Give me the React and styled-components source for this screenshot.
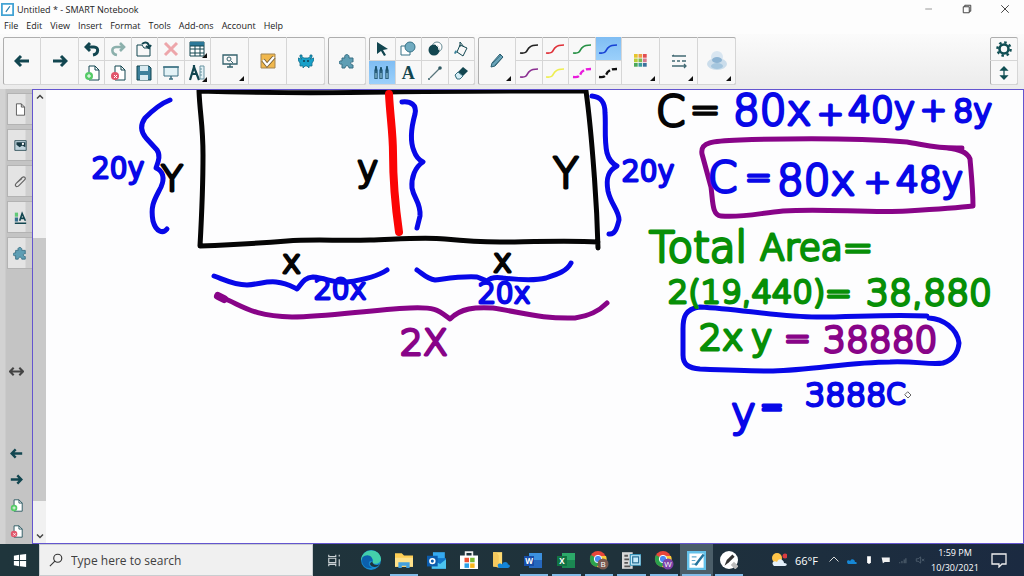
import styled, { createGlobalStyle } from "styled-components";

const GlobalStyle = createGlobalStyle`
  * {
    box-sizing: border-box;
  }
  body {
    margin: 0;
    background: #fdfdfd;
    color: #222;
    font-family: "Open Sans", "Noto Sans", sans-serif;
    font-size: 10px;
  }
  button {
    border: 0;
    padding: 0;
    background: none;
    color: inherit;
    font: inherit;
  }
`

const Page = styled.div`
  display: flex;
  flex-direction: column;
  height: 100vh;
  overflow: hidden;
`

const TitleBar = styled.header`
  display: flex;
  align-items: center;
  height: 18px;
  flex: none;
  padding-left: 1px;
`

const Title = styled.h1`
  margin: 0;
  flex: 1;
  padding-left: 3px;
  font-size: 9px;
  font-weight: 400;
`

const WindowButton = styled.button`
  width: 38px;
  height: 18px;
  display: grid;
  place-items: center;
`

const MenuBar = styled.nav`
  display: flex;
  align-items: center;
  gap: 8px;
  height: 16px;
  flex: none;
  padding-left: 4px;
`

const MenuItem = styled.button`
  font-size: 9px;
  line-height: 16px;
`

const ToolBar = styled.div`
  display: flex;
  align-items: flex-start;
  gap: 3px;
  height: 55px;
  flex: none;
  padding: 3px 6px 0 3px;
  background: linear-gradient(#fbfbfb, #ebebeb);
`

const ToolGroup = styled.div`
  display: flex;
  height: 48px;
  border-radius: 2px;
  overflow: hidden;
  background: #f8f8f8;
  outline: 1px solid #aeaeae;
  outline-offset: -1px;
  margin-left: ${p => p.$end ? "auto" : "0"};
`

const ToolGrid = styled.div`
  display: grid;
  grid-template-columns: repeat(${p => p.$cols}, 1fr);
  grid-template-rows: 24px 24px;
  width: ${p => p.$width}px;
`

const ToolButton = styled.button`
  position: relative;
  display: grid;
  place-items: center;
  min-width: ${p => p.$large ? "38px" : "0"};
  border-right: 1px solid #d6d6d6;
  border-bottom: 1px solid #d6d6d6;
  background: ${p => p.$active ? "linear-gradient(#7fbdf3, #9bd0fb)" : "transparent"};
`

const Corner = styled.span`
  position: absolute;
  right: ${p => p.$large ? "4px" : "3px"};
  bottom: ${p => p.$large ? "3px" : "2px"};
  border-left: 5px solid transparent;
  border-bottom: 5px solid #111;
`

const Workspace = styled.main`
  display: flex;
  flex: 1;
  min-height: 0;
`

const Sidebar = styled.aside`
  display: flex;
  flex-direction: column;
  width: 32px;
  flex: none;
  padding-top: 4px;
  background: linear-gradient(90deg, #d2d2d2 5px, #c4c4c4 6px);
`

const SideTabs = styled.div`
  display: flex;
  flex-direction: column;
  gap: 4px;
  padding-left: 7px;
`

const SideTab = styled.button`
  height: 32px;
  display: grid;
  place-items: center;
  background: linear-gradient(90deg, #e4e4e4 17px, #cfcfcf 18px);
  border: 1px solid #b3b3b3;
  border-right: 0;
`

const SideNav = styled.div`
  display: flex;
  flex-direction: column;
  align-items: center;
  flex: 1;
  justify-content: flex-end;
`

const SideButton = styled.button`
  width: 24px;
  height: 26px;
  display: grid;
  place-items: center;
  margin-bottom: ${p => p.$apart ? "56px" : "0"};
`

const Sheet = styled.section`
  display: flex;
  flex: 1;
  min-width: 0;
  border: 1px solid #6455cf;
  background: #fdfdfe;
`

const ScrollTrack = styled.div`
  display: flex;
  flex-direction: column;
  width: 13px;
  flex: none;
  background: #f1f1f1;
`

const ScrollButton = styled.button`
  height: 14px;
  display: grid;
  place-items: center;
`

const ScrollRest = styled.div`
  flex: ${p => p.$share};
  background: ${p => p.$thumb ? "#c9c9c9" : "transparent"};
`

const Drawing = styled.svg`
  flex: 1;
  min-width: 0;
  height: 100%;
  fill: none;
  stroke-linecap: round;
  stroke-linejoin: round;
`

const Ink = styled.path`
  stroke: ${p => p.$color};
  stroke-width: ${p => p.$wide ? 8 : 5};
`

const Written = styled.text`
  font-family: "DejaVu Sans", sans-serif;
  font-weight: 200;
  font-size: ${p => p.$size}px;
  fill: ${p => p.$color};
  stroke: ${p => p.$color};
  stroke-width: 3;
`

const TaskBar = styled.footer`
  display: flex;
  align-items: stretch;
  height: 32px;
  flex: none;
  background: linear-gradient(90deg, #1f353c, #1f323b 60%, #1b2a41);
  color: #fff;
`

const StartButton = styled.button`
  width: 39px;
  display: grid;
  place-items: center;
`

const SearchBox = styled.label`
  display: flex;
  align-items: center;
  gap: 8px;
  width: 274px;
  padding-left: 9px;
  background: #f0f0f0;
  border: 1px solid #c9cdd0;
`

const SearchInput = styled.input`
  border: 0;
  background: none;
  outline: 0;
  padding: 0;
  width: 200px;
  font: 12px "Open Sans", sans-serif;
  &::placeholder {
    color: #404040;
    opacity: 1;
  }
`

const TaskView = styled.button`
  width: 42px;
  display: grid;
  place-items: center;
`

const Apps = styled.div`
  display: grid;
  grid-template-columns: repeat(12, 1fr);
  width: 390px;
`

const AppButton = styled.button`
  display: grid;
  place-items: center;
  padding-top: 2px;
  background: ${p => p.$active ? "#4b5e69" : "transparent"};
  border-bottom: 2px solid transparent;
  border-image: ${p => p.$open ? "linear-gradient(90deg, transparent 4px, #82bce8 4px, #82bce8 29px, transparent 29px) 2" : "none"};
`

const Tray = styled.div`
  display: flex;
  align-items: center;
  flex: 1;
  justify-content: flex-end;
  padding-right: 17px;
`

const Weather = styled.button`
  display: flex;
  align-items: center;
  gap: 8px;
  font-size: 11px;
  margin-right: 10px;
`

const TrayIcons = styled.div`
  display: grid;
  grid-template-columns: repeat(5, 17px);
  place-items: center;
  margin-left: 3px;
`

const Clock = styled.time`
  width: 54px;
  text-align: center;
  font-size: 9px;
  line-height: 15px;
  margin-right: 9px;
`

const DARK = "#124650"
const BLUE = "#0808e8"
const GREEN = "#078f07"
const PURPLE = "#880488"
const BLACK = "#050505"

const icons = {
  back: <path d="M15 8H3M7 3 2 8l5 5" stroke={DARK} strokeWidth="3" />,
  forward: <path d="M1 8h12M9 3l5 5-5 5" stroke={DARK} strokeWidth="3" />,
  undo: <path d="M6 2 2 6l4 4M3 6h7c5 0 5 7-1 8" stroke={DARK} strokeWidth="3" />,
  redo: <path d="m10 2 4 4-4 4M13 6H6c-5 0-5 7 1 8" stroke="#8cb0ac" strokeWidth="2.6" />,
  open: <g><path d="M1 15V4h5l2 3h6v8z" stroke={DARK} /><path d="M6 3c4-3 7-1 7 3m-3-1 3 2 2-3" stroke={DARK} strokeWidth="2" /></g>,
  remove: <path d="m2 2 12 12M14 2 2 14" stroke="#eda6aa" strokeWidth="3" />,
  table: <g><path d="M1 1h14v14H1z" fill="#fff" stroke={DARK} /><path d="M1 1h14v4H1z" fill="#2c7898" /><path d="M1 5h14M1 8h14M1 12h14M6 5v10M11 5v10" stroke={DARK} /></g>,
  addPage: <g><path d="M5 1h6l4 4v10H5z" fill="#fff" stroke={DARK} /><path d="M11 1v4h4" stroke={DARK} /><circle cx="5" cy="11" r="4" fill="#55cb67" /><path d="M5 9v4M3 11h4" stroke="#fff" /></g>,
  delPage: <g><path d="M5 1h6l4 4v10H5z" fill="#fff" stroke={DARK} /><path d="M11 1v4h4" stroke={DARK} /><circle cx="5" cy="11" r="4" fill="#e2566c" /><path d="m4 10 3 3M7 10l-3 3" stroke="#fff" /></g>,
  save: <g><path d="M1 1h12l2 2v12H1z" fill="#3d809b" stroke={DARK} /><path d="M4 1h8v5H4zM4 10h8v5H4z" fill="#d8eaf0" /></g>,
  shade: <g><path d="M1 2h14v9H1z" fill="#e3f2f6" stroke="#3d7183" /><path d="M0 2h16M8 11v3M6 14h4" stroke="#3d7183" strokeWidth="1.5" /></g>,
  measure: <g><path d="m1 15 4-13 5 13M3 9h5M5 2V0" stroke={DARK} strokeWidth="2.2" /><path d="M11 1h4v13h-4zM11 4h2M11 7h2M11 10h2" fill="#e3f2f6" stroke="#6893a0" /></g>,
  screen: <g><path d="M1 2h14v9H1zM8 11v3M5 14h6" stroke="#34616c" strokeWidth="1.3" /><circle cx="7" cy="6" r="2" stroke="#34616c" /><path d="m9 8 2 2" stroke="#34616c" /></g>,
  check: <g><path d="M1 1h14v14H1z" fill="#f1b84d" stroke="#a38553" /><path d="m3 7 4 5 7-8" stroke="#735d36" strokeWidth="4" /><path d="m3 7 4 5 7-8" stroke="#fff" strokeWidth="2.2" /></g>,
  monster: <g><path d="M4 4V2H2v2l2 2-4-1v2l2 3v3h3v2l2-2h2l2 2v-2h3v-3l2-3V5l-4 1 2-2V2h-2v2l-2 1H6z" fill="#18a0c8" stroke="#176d89" strokeWidth=".8" /><circle cx="6" cy="8" r="1" fill="#123d50" /><circle cx="10" cy="8" r="1" fill="#123d50" /></g>,
  puzzle: <path d="M3 5h3C4 1 11 0 10 5h4v4c-3-1-3 3 0 3v3h-4c0-3-4-3-4 0H3v-4c-4 1-4-4 0-3z" fill="#5e9eb4" stroke="#396f83" />,
  pointer: <path d="m3 1 11 7-5 1 3 5-2 1-3-5-4 3z" fill={DARK} />,
  shapes: <g><path d="M1 5h9v9H1z" fill="#fff" stroke="#367287" /><circle cx="10" cy="6" r="5" fill="#70abc0" stroke="#367287" /></g>,
  fillShape: <g><circle cx="10" cy="6" r="5" fill="#fff" stroke="#6a8d96" /><circle cx="7" cy="9" r="5.5" fill={DARK} /><path d="M9 4a5 5 0 0 1 3 5" stroke="#fff" /></g>,
  bucket: <g><path d="m7 4 7 3-4 8-6-4zM7 6V1l4 5" stroke={DARK} /><path d="M3 9c-4 4 0 5 1 2z" fill="#398199" /></g>,
  pens: <g><path d="M2 5v9M7 5v9M13 5v9" stroke="#2a5f7c" strokeWidth="3.4" /><path d="m1 5 1-4 1 4zM6 5l1-3 1 3zM12 5l1-4 1 4z" fill="#174f6b" stroke="#174f6b" /><path d="M2 8v5M7 8v5M13 8v5" stroke="#8ec0d6" strokeWidth="1.2" /></g>,
  line: <g><path d="M3 13 13 3" stroke="#58757c" strokeWidth="1.3" /><circle cx="13" cy="3" r="1.8" fill="#315b65" /><circle cx="2" cy="14" r="1" fill="#315b65" /></g>,
  eraser: <g><path d="m2 10 8-8 5 4-8 8-4-1z" fill={DARK} /><path d="m2 10 3-3 5 4-3 3H4z" fill="#d4edf5" stroke="#397181" /></g>,
  pencil: <g><path d="M3 10 11 1l3 3-8 9-4 1z" fill="#68a3b8" stroke="#2b5e70" /><path d="m4 10 8-8M6 12l8-8" stroke="#2b5e70" strokeWidth=".6" /></g>,
  lines: <path d="M1 3h14M1 3l2-1M1 8h3M6 8h3M11 8h4M1 13h14M13 11l2 2-2 2" stroke="#416973" strokeWidth="1.3" />,
  gear: <g><circle cx="8" cy="8" r="4.5" stroke="#0f4e53" strokeWidth="2.6" /><circle cx="8" cy="8" r="6.6" stroke="#0f4e53" strokeWidth="2.4" strokeDasharray="2.5 2.68" strokeLinecap="butt" /></g>,
  updown: <path d="M8 3v10M5 5l3-3 3 3zM5 11l3 3 3-3z" fill="#0f4e53" stroke="#0f4e53" strokeWidth="1.3" />,
  leftright: <path d="M2 8h12M5 4 1 8l4 4M11 4l4 4-4 4" stroke="#444" strokeWidth="2.2" />,
  page: <path d="M3 1h6l4 4v10H3zM9 1v4h4" fill="#fff" stroke="#444" />,
  photo: <g><path d="M1 2h14v12H1z" fill="#bfd3dc" stroke="#23444d" /><path d="M3 4h11v6l-4-2-3 2-4-3z" fill="#173943" /><circle cx="11" cy="6" r="1.4" fill="#fff" /></g>,
  clip: <path d="m3 10 7-7c3-2 5 1 3 3l-7 7c-3 3-6 0-3-3l7-6" stroke="#626262" strokeWidth="1.4" />,
  textTab: <g><path d="M1 2h4v5H1z" fill="#62c978" /><path d="M1 8h4v5H1z" fill="#36708d" /><path d="m7 12 3-9 4 9M8 9h5M1 15h14" stroke={DARK} strokeWidth="2" /></g>,
  up: <path d="m4 10 4-4 4 4" stroke="#444" strokeWidth="2" />,
  down: <path d="m4 6 4 4 4-4" stroke="#444" strokeWidth="2" />,
  min: <path d="M3 8h9" stroke="#777" />,
  restore: <path d="M3 5h8v8H3zM5 5V3h8v8h-2" stroke="#333" strokeWidth="1.2" />,
  close: <path d="m3 3 10 10M13 3 3 13" stroke="#333" strokeWidth="1.2" />,
  logo: <g><path d="M1 1h14v14H1z" fill="#fff" stroke="#43a3d4" strokeWidth="2.4" /><path d="m6 11 5-7" stroke="#287dac" strokeWidth="1.5" /></g>,
  windows: <path d="M1 3 7 2v6H1zM8 2l7-1v7H8zM1 9h6v6l-6-1zM8 9h7v7l-7-1z" fill="#fff" />,
  search: <g><circle cx="10" cy="6" r="4.6" stroke="#333" strokeWidth="1.3" /><path d="m7 9-6 6" stroke="#333" strokeWidth="1.3" /></g>,
  tasks: <path d="M2 2v2h8V2M2 6h8v5H2zM2 15v-2h8v2M14 2v2M14 7v8" stroke="#ccd2d5" strokeWidth="1.3" />,
  edge: <g><circle cx="8" cy="8" r="8" fill="#168bd0" /><path d="M0 8C1-2 15-2 16 7c0 4-5 5-7 3 3-4-5-6-9-2z" fill="#44cfaa" /><path d="M1 6c4-4 9-1 8 3-2-2-5 3 0 5-6 2-9-3-8-8z" fill="#0c60ad" /><path d="M9 9c0 3 4 4 6 2-2 4-7 3-8 0z" fill="#1f343b" /></g>,
  folder: <g><path d="M0 2h6l2 2h8v10H0z" fill="#ffce55" /><path d="M0 6h16v8H0z" fill="#ffe18a" /><path d="M3 15v-5h10v5h-3v-2H6v2z" fill="#43a0df" /></g>,
  outlook: <g><path d="M5 1h10v6H5z" fill="#35aaf0" /><path d="M4 6h12v9H4z" fill="#1276c8" /><path d="m4 7 7 4 5-4v8H4z" fill="#4cc4ef" /><path d="M0 4h9v9H0z" fill="#0b5cad" /><circle cx="4.500" cy="8.500" r="2" stroke="#fff" strokeWidth="1.4" /></g>,
  store: <g><path d="M5 5V1h6v4" stroke="#eee" strokeWidth="1.5" /><path d="M0 4h16v12H0z" fill="#fff" /><path d="M4 6h4v4H4z" fill="#ef5033" /><path d="M9 6h4v4H9z" fill="#78b831" /><path d="M4 11h4v4H4z" fill="#2da1e8" /><path d="M9 11h4v4H9z" fill="#f8b61c" /></g>,
  drive: <g><path d="M1 1h8v13H1z" fill="#ffdb72" /><path d="M1 1h3l2 3v11l-5-2z" fill="#f5c85d" /><path d="M6 15c-3-4 2-5 3-3 1-4 6-2 5 0 3 0 2 3 0 3z" fill="#1486d9" /></g>,
  notes: <g><path d="M0 1h9v14H0z" fill="#d8d8d8" /><path d="M2 4h3M2 7h4M2 10h3M2 13h5" stroke="#555" strokeWidth="1.5" /><path d="M7 3h9v9H7z" fill="#c9ecfb" stroke="#3893b9" /><path d="M9 5h5v5H9z" stroke="#276f96" /></g>,
  smart: <g><path d="M1 1h14v14H1z" fill="#fff" stroke="#64c1e9" strokeWidth="2" /><path d="M4 5h4M4 8h3M4 11h5" stroke="#62a9cc" /><path d="m7 12 7-9" stroke="#25739c" strokeWidth="2" /></g>,
  inkApp: <g><circle cx="8" cy="8" r="8" fill="#fff" /><path d="m4 13 2-5 5-5 2 2-5 5z" fill="#333" /><path d="m11 11 4 4" stroke="#bbb" strokeWidth="4" /></g>,
  weather: <g><circle cx="6" cy="6" r="5" fill="#ffc448" /><path d="M3 14c-4-4 1-6 3-4 2-5 7-2 7 1 4 0 3 3 1 3z" fill="#e4effa" /><circle cx="14" cy="4" r="2.500" fill="#d93c42" /></g>,
  chevron: <path d="m2 10 6-6 6 6" stroke="#ddd" strokeWidth="1.3" />,
  cloud: <path d="M2 12c-2-5 3-5 4-3 2-5 7-2 7 1 4 0 3 3 1 3H3z" fill="#1687d5" />,
  usb: <path d="M5 2h6v10l-2 2H7l-2-2z" fill="#fff" />,
  battery: <path d="M1 4h13v7H6l-3 2z" fill="#f1f1f1" />,
  wifi: <path d="M3 13v-2M7 13V9M11 13V6M14 13V4" stroke="#526270" strokeWidth="2" />,
  sound: <path d="M2 6h3l4-3v10l-4-3H2zM11 6l4 4M15 6l-4 4" stroke="#647281" />,
  message: <path d="M1 2h14v10h-4l-3 3v-3H1z" stroke="#eee" strokeWidth="1.3" />,
}

function Icon({ name, size = 16 }) {
  return <svg width={size} height={size} viewBox="0 0 16 16" fill="none" aria-hidden="true">{icons[name]}</svg>
}

function Stroke({ color, dash }) {
  return (
    <svg width="20" height="12" viewBox="0 0 20 12" fill="none" aria-hidden="true">
      <path d="M1 10c9 1 6-4 10-6 2-2 5-2 8-2" stroke={color} strokeWidth={dash ? 2.4 : 1.6} strokeDasharray={dash} />
    </svg>
  )
}

function ColorGrid() {
  const colors = ["#e6c52c", "#ef9b48", "#e24e52", "#b7ce38", "#7dbb4f", "#d87b8d", "#4ba85b", "#389c9c", "#3b719d"]
  return (
    <svg width="13" height="13" aria-hidden="true">
      {colors.map((c, i) => <rect key={c} x={(i % 3) * 4.5} y={Math.floor(i / 3) * 4.5} width="3.700" height="3.700" fill={c} />)}
    </svg>
  )
}

function MagicPen() {
  return (
    <svg width="22" height="22" aria-hidden="true">
      <circle cx="11" cy="7" r="6" fill="#d9e6f1" />
      <ellipse cx="11" cy="14" rx="10" ry="6" fill="#cbddeb" />
      <ellipse cx="11" cy="10" rx="5" ry="3" fill="#8db4d3" />
      <ellipse cx="11" cy="16" rx="6" ry="3" fill="#a5c6de" />
    </svg>
  )
}

const LetterTool = styled.span`
  color: #124650;
  font: 700 18px/20px "Liberation Serif", serif;
`

function Office({ letter, color, light }) {
  return (
    <svg width="19" height="17" aria-hidden="true">
      <path d="M5 1h13v15H5z" fill={light} />
      <path d="M5 8h13v8H5z" fill={color} opacity="0.6" />
      <path d="M0 4h10v10H0z" fill={color} />
      <text x="5" y="12" textAnchor="middle" fontSize="8" fontWeight="700" fill="#fff">{letter}</text>
    </svg>
  )
}

function Chrome({ letter, badge }) {
  return (
    <svg width="20" height="20" aria-hidden="true">
      <circle cx="9" cy="9" r="8" fill="#e8463a" />
      <path d="M2 5a8 8 0 0 0 6 12l4-6-3-2z" fill="#2ba24c" />
      <path d="M9 6h8a8 8 0 0 1-9 11l4-7z" fill="#fbcb3a" />
      <circle cx="9" cy="9" r="3.700" fill="#4a8af4" stroke="#fff" />
      <circle cx="14" cy="14" r="5.500" fill={badge} />
      <text x="14" y="17" textAnchor="middle" fontSize="8" fill="#fff">{letter}</text>
    </svg>
  )
}

function Tool({ label, icon, large, active, more, children }) {
  return (
    <ToolButton aria-label={label} $large={large} $active={active}>
      {children || <Icon name={icon} />}
      {more && <Corner $large={large} />}
    </ToolButton>
  )
}

const menus = ["File", "Edit", "View", "Insert", "Format", "Tools", "Add-ons", "Account", "Help"]

const pageTools = [
  ["Undo", "undo"], ["Redo", "redo"], ["Open", "open"], ["Delete", "remove"], ["Table", "table", true],
  ["Add page", "addPage"], ["Delete page", "delPage"], ["Save", "save"], ["Screen shade", "shade"], ["Measurement", "measure", true],
]

const pens = [
  ["Black", "#222"], ["Red", "#df3038"], ["Green", "#269044"], ["Blue", "#1742d5"],
  ["Purple", "#8b2f91"], ["Yellow", "#eeee50"], ["Magenta", "#e91bdc", "6 2"], ["Dashed", "#111", "6 2"],
]

// pen strokes, in window coordinates
const strokes = [
  [BLACK, "M199 91C200 115 203 125 203 155S202 210 200 246C225 245 262 243 287 241S340 241 370 240S425 237 445 239S480 242 500 242S570 240 598 242M199 91C260 93 335 93 389 92S520 91 586 91C590 120 592 145 594 172S597 210 598 248"],
  [BLUE, "M170 100C162 103 151 112 145 118C140 125 141 132 146 138L157 150C161 156 158 162 156 168C163 171 165 178 161 187C155 199 150 205 153 221C156 232 163 234 167 229"],
  [BLUE, "M402 102C411 101 417 105 415 114C410 132 411 144 414 151C416 157 419 160 423 162C415 167 411 178 412 188C414 199 421 203 420 216L417 228"],
  [BLUE, "M592 96C601 97 605 102 605 113C606 126 604 139 607 153C609 160 613 164 617 166C607 171 606 180 608 191C611 205 619 210 619 220C617 228 615 235 609 234"],
  [BLUE, "M214 276C225 280 234 285 247 285C260 284 266 281 276 282C287 283 291 286 297 289C302 284 303 278 313 277C327 278 334 284 347 282C362 280 378 276 387 270"],
  [BLUE, "M417 270C423 274 427 279 435 280C451 278 463 276 477 277C482 279 484 280 487 281C491 277 497 277 503 278C520 280 534 281 546 278C558 274 567 271 571 263"],
  [PURPLE, "M218 296C243 305 250 316 292 317C327 317 368 310 410 308C436 307 438 310 450 319C461 308 475 307 493 308C525 313 541 319 575 318C589 316 598 312 607 303"],
  [PURPLE, "M962 148C939 149 926 145 907 142C856 138 798 138 740 140C712 141 700 142 702 154L711 187C713 202 712 215 721 216C742 218 760 213 783 211C822 208 864 213 907 211C940 209 956 208 973 206C973 190 971 171 970 159C967 151 957 149 947 148"],
  [BLUE, "M927 316C890 314 854 317 817 317C778 317 740 309 700 307C685 309 683 317 683 329L683 355C683 365 689 368 700 369C725 370 750 371 773 371C812 370 852 362 890 362C916 361 931 365 943 363C953 360 958 353 959 343C957 328 943 319 929 318"],
]

const writing = [
  ["C", 656, 126, 42, BLACK], ["=", 690, 122, 36, BLACK],
  ["80x", 733, 125, 42, BLUE], ["+", 817, 125, 32, BLUE], ["40y", 848, 122, 36, BLUE], ["+", 920, 121, 32, BLUE], ["8y", 953, 122, 32, BLUE],
  ["C", 708, 192, 42, BLUE], ["=", 745, 188, 32, BLUE], ["80x", 777, 195, 42, BLUE], ["+", 864, 193, 32, BLUE], ["48y", 896, 192, 36, BLUE],
  ["Total", 649, 262, 42, GREEN], ["Area=", 760, 260, 36, GREEN],
  ["2(19,440)", 668, 303, 32, GREEN], ["=", 825, 304, 32, GREEN], ["38,880", 866, 305, 36, GREEN],
  ["2x", 699, 350, 36, GREEN], ["y", 751, 350, 36, GREEN], ["=", 784, 349, 32, PURPLE], ["38880", 823, 352, 36, PURPLE],
  ["y", 731, 427, 42, BLUE], ["=", 760, 416, 28, BLUE], ["3888", 805, 406, 32, BLUE], ["C", 886, 404, 28, BLUE],
  ["20y", 92, 178, 28, BLUE], ["Y", 161, 191, 36, BLACK], ["y", 357, 181, 36, BLACK], ["Y", 553, 188, 42, BLACK],
  ["20y", 622, 181, 28, BLUE], ["x", 282, 273, 32, BLACK], ["x", 493, 272, 32, BLACK],
  ["20x", 314, 299, 28, BLUE], ["20x", 478, 303, 28, BLUE], ["2X", 400, 355, 36, PURPLE],
]

function Board() {
  return (
    <Drawing role="img" aria-label="Area and cost notes">
      <g transform="translate(-46 -90)">
        {strokes.map(([color, d]) => <Ink key={d} $color={color} d={d} />)}
        <Ink $color="#fb0505" $wide d="M389 94C390 115 393 133 393 153S395 204 399 232" />
        <Ink $color={PURPLE} $wide d="m218 296 6 3" />
        {writing.map(([text, x, y, size, color]) => (
          <Written key={x + "-" + y} x={x} y={y} $size={size} $color={color}>{text}</Written>
        ))}
        <path d="m908 392 3 3-3 3-3-3z" stroke="#666" />
      </g>
    </Drawing>
  )
}

function Toolbar() {
  return (
    <ToolBar>
      <ToolGroup>
        <Tool large label="Previous page" icon="back" />
        <Tool large label="Next page" icon="forward" />
        <ToolGrid $cols={5} $width={132}>
          {pageTools.map(([label, icon, more]) => <Tool key={icon} label={label} icon={icon} more={more} />)}
        </ToolGrid>
        <Tool large more label="Display" icon="screen" />
        <Tool large label="Response" icon="check" />
        <Tool large label="Activities" icon="monster" />
      </ToolGroup>
      <ToolGroup>
        <Tool large label="Add-ons" icon="puzzle" />
      </ToolGroup>
      <ToolGroup>
        <ToolGrid $cols={4} $width={106}>
          <Tool label="Select" icon="pointer" />
          <Tool label="Shapes" icon="shapes" />
          <Tool label="Regular polygons" icon="fillShape" />
          <Tool label="Fill" icon="bucket" />
          <Tool label="Pens" icon="pens" active />
          <Tool label="Text"><LetterTool>A</LetterTool></Tool>
          <Tool label="Lines" icon="line" />
          <Tool label="Eraser" icon="eraser" />
        </ToolGrid>
      </ToolGroup>
      <ToolGroup>
        <Tool large more label="Pen type" icon="pencil" />
        <ToolGrid $cols={4} $width={106}>
          {pens.map(([label, color, dash]) => (
            <Tool key={label} label={label} active={label === "Blue"}><Stroke color={color} dash={dash} /></Tool>
          ))}
        </ToolGrid>
        <Tool large more label="Color"><ColorGrid /></Tool>
        <Tool large more label="Line style" icon="lines" />
        <Tool large more label="Transparency"><MagicPen /></Tool>
      </ToolGroup>
      <ToolGroup $end>
        <ToolGrid $cols={1} $width={28}>
          <Tool label="Settings" icon="gear" />
          <Tool label="Move toolbar" icon="updown" />
        </ToolGrid>
      </ToolGroup>
    </ToolBar>
  )
}

function Taskbar() {
  return (
    <TaskBar>
      <StartButton aria-label="Start"><Icon name="windows" size={14} /></StartButton>
      <SearchBox>
        <Icon name="search" size={14} />
        <SearchInput aria-label="Search" placeholder="Type here to search" />
      </SearchBox>
      <TaskView aria-label="Task view"><Icon name="tasks" size={14} /></TaskView>
      <Apps>
        <AppButton aria-label="Edge"><Icon name="edge" size={20} /></AppButton>
        <AppButton aria-label="Files" $open><Icon name="folder" size={18} /></AppButton>
        <AppButton aria-label="Outlook"><Icon name="outlook" size={19} /></AppButton>
        <AppButton aria-label="Store"><Icon name="store" size={18} /></AppButton>
        <AppButton aria-label="Drive"><Icon name="drive" size={18} /></AppButton>
        <AppButton aria-label="Word" $open><Office letter="W" color="#174da8" light="#3c91df" /></AppButton>
        <AppButton aria-label="Excel" $open><Office letter="X" color="#117343" light="#2ca969" /></AppButton>
        <AppButton aria-label="Chrome B" $open><Chrome letter="B" badge="#795a50" /></AppButton>
        <AppButton aria-label="Notes" $open><Icon name="notes" size={19} /></AppButton>
        <AppButton aria-label="Chrome W" $open><Chrome letter="W" badge="#7c42a8" /></AppButton>
        <AppButton aria-label="SMART Notebook" $open $active><Icon name="smart" size={19} /></AppButton>
        <AppButton aria-label="SMART Ink" $open><Icon name="inkApp" size={18} /></AppButton>
      </Apps>
      <Tray>
        <Weather><Icon name="weather" />66°F</Weather>
        <Icon name="chevron" size={12} />
        <TrayIcons>
          <Icon name="cloud" size={11} />
          <Icon name="usb" size={10} />
          <Icon name="battery" size={10} />
          <Icon name="wifi" size={9} />
          <Icon name="sound" size={10} />
        </TrayIcons>
        <Clock>1:59 PM<br />10/30/2021</Clock>
        <Icon name="message" />
      </Tray>
    </TaskBar>
  )
}

function App() {
  return (
    <Page>
      <GlobalStyle />
      <TitleBar>
        <Icon name="logo" size={13} />
        <Title>Untitled * - SMART Notebook</Title>
        <WindowButton aria-label="Minimize"><Icon name="min" size={12} /></WindowButton>
        <WindowButton aria-label="Restore"><Icon name="restore" size={12} /></WindowButton>
        <WindowButton aria-label="Close"><Icon name="close" size={12} /></WindowButton>
      </TitleBar>
      <MenuBar>
        {menus.map(m => <MenuItem key={m}>{m}</MenuItem>)}
      </MenuBar>
      <Toolbar />
      <Workspace>
        <Sidebar>
          <SideTabs>
            <SideTab aria-label="Pages"><Icon name="page" size={13} /></SideTab>
            <SideTab aria-label="Gallery"><Icon name="photo" size={13} /></SideTab>
            <SideTab aria-label="Attachments"><Icon name="clip" size={13} /></SideTab>
            <SideTab aria-label="Properties"><Icon name="textTab" size={13} /></SideTab>
            <SideTab aria-label="Add-ons"><Icon name="puzzle" size={14} /></SideTab>
          </SideTabs>
          <SideNav>
            <SideButton aria-label="Move sidebar" $apart><Icon name="leftright" size={15} /></SideButton>
            <SideButton aria-label="Previous"><Icon name="back" size={13} /></SideButton>
            <SideButton aria-label="Next"><Icon name="forward" size={13} /></SideButton>
            <SideButton aria-label="New page"><Icon name="addPage" size={13} /></SideButton>
            <SideButton aria-label="Remove page"><Icon name="delPage" size={13} /></SideButton>
          </SideNav>
        </Sidebar>
        <Sheet>
          <ScrollTrack>
            <ScrollButton aria-label="Scroll up"><Icon name="up" size={12} /></ScrollButton>
            <ScrollRest $share={134} />
            <ScrollRest $share={263} $thumb />
            <ScrollRest $share={28} />
            <ScrollButton aria-label="Scroll down"><Icon name="down" size={12} /></ScrollButton>
          </ScrollTrack>
          <Board />
        </Sheet>
      </Workspace>
      <Taskbar />
    </Page>
  )
}

export default App
